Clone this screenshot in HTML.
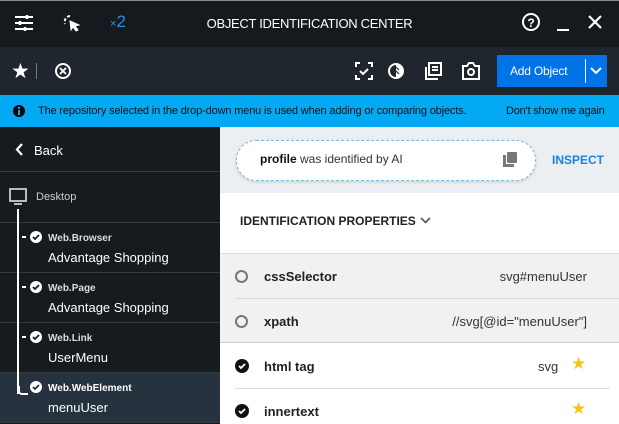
<!DOCTYPE html><html><head><style>
*{margin:0;padding:0;box-sizing:border-box}
body{width:619px;height:424px;overflow:hidden;font-family:"Liberation Sans",sans-serif;background:#fff;position:relative}
.a{position:absolute;white-space:nowrap}
.t{color:#fff}
</style></head><body>
<div class="a" style="left:0;top:0;width:619px;height:47px;background:#151a1e;border-top:1px solid #888"></div>
<svg class="a" style="left:14px;top:14px" width="20" height="18" viewBox="0 0 20 18" stroke="#fff" stroke-width="2" fill="none"><path d="M1 3h18M1 9h18M1 15h18"/><path d="M13 1v4M6 7v4M11 13v4" stroke-width="2.5"/></svg>
<svg class="a" style="left:62px;top:14px" width="20" height="20" viewBox="0 0 20 20" fill="none" stroke="#fff" stroke-width="2"><path d="M8 2a6 6 0 0 0-5 8" stroke-dasharray="3 2"/><path d="M8 7l9 4-4 1 3 4-2 1-3-4-2 3z" fill="#fff" stroke-width="1"/></svg>
<div class="a" style="left:110px;top:12px;color:#2f8fe6;font-size:17px"><span style="font-size:11px">×</span>2</div>
<div class="a t" style="left:0;width:619px;top:16px;text-align:center;font-size:13px;letter-spacing:-0.3px">OBJECT IDENTIFICATION CENTER</div>
<svg class="a" style="left:521px;top:12px" width="20" height="20" viewBox="0 0 20 20"><circle cx="10" cy="10" r="8" stroke="#fff" stroke-width="2" fill="none"/><text x="10" y="15" fill="#fff" font-size="12" font-weight="bold" text-anchor="middle" font-family="Liberation Sans">?</text></svg>
<div class="a" style="left:557px;top:29px;width:12px;height:2px;background:#fff"></div>
<svg class="a" style="left:588px;top:15px" width="14" height="14" stroke="#fff" stroke-width="2.2"><path d="M1 1l12 12M13 1L1 13"/></svg>
<div class="a" style="left:0;top:47px;width:619px;height:48px;background:#1f262d"></div>
<div class="a t" style="left:11px;top:59px;font-size:21px">★</div>
<div class="a" style="left:36px;top:63px;width:1px;height:16px;background:#777"></div>
<svg class="a" style="left:54px;top:62px" width="18" height="18"><circle cx="9" cy="9" r="7" stroke="#fff" stroke-width="2" fill="none"/><path d="M6 6l6 6M12 6l-6 6" stroke="#fff" stroke-width="1.8"/></svg>
<svg class="a" style="left:355px;top:62px" width="18" height="18" stroke="#fff" stroke-width="2" fill="none"><path d="M1 5V1h4M13 1h4v4M17 13v4h-4M5 17H1v-4M5 9l3 3 5-5"/></svg>
<svg class="a" style="left:387px;top:62px" width="18" height="18"><circle cx="9" cy="9" r="7" stroke="#fff" stroke-width="2" fill="none"/><path d="M9 2a7 7 0 0 1 0 14z" fill="#fff"/><path d="M9 5l3 3M9 9l3 3" stroke="#1f262d" stroke-width="1.2"/></svg>
<svg class="a" style="left:424px;top:62px" width="18" height="18" stroke="#fff" stroke-width="2" fill="none"><rect x="5" y="1" width="12" height="12"/><path d="M2 5v12h12M8 5h6M8 8h6"/></svg>
<svg class="a" style="left:461px;top:62px" width="20" height="18" stroke="#fff" stroke-width="2" fill="none"><path d="M2 4h4l2-3h4l2 3h4v13H2z"/><circle cx="10" cy="10" r="3"/></svg>
<div class="a t" style="left:497px;top:55px;width:82px;height:32px;background:#0073e7;font-size:12px;letter-spacing:-0.2px;line-height:32px;padding-left:13px">Add Object</div>
<div class="a" style="left:579px;top:55px;width:28px;height:32px;background:#0073e7"></div>
<div class="a" style="left:585px;top:59px;width:1px;height:24px;background:#fff"></div>
<svg class="a" style="left:590px;top:67px" width="12" height="8" stroke="#fff" stroke-width="2" fill="none"><path d="M1 1l5 5 5-5"/></svg>
<div class="a" style="left:0;top:95px;width:619px;height:32px;background:#03a9f2"></div>
<svg class="a" style="left:13px;top:105px" width="12" height="12"><circle cx="6" cy="6" r="6" fill="#000"/><rect x="5" y="5" width="2" height="5" fill="#03a9f2"/><rect x="5" y="2" width="2" height="2" fill="#03a9f2"/></svg>
<div class="a" style="left:38px;top:105px;font-size:11px;letter-spacing:-0.15px;color:#111">The repository selected in the drop-down menu is used when adding or comparing objects.</div>
<div class="a" style="left:506px;top:105px;font-size:11px;letter-spacing:-0.2px;color:#111">Don't show me again</div>
<!-- left -->
<div class="a" style="left:0;top:127px;width:220px;height:297px;background:#161b1f"></div>
<div class="a" style="left:0;top:372px;width:220px;height:50px;background:#26323e"></div>
<div class="a" style="left:0;top:171px;width:220px;height:1px;background:#333a40"></div>
<div class="a" style="left:0;top:222px;width:220px;height:1px;background:#333a40"></div>
<div class="a" style="left:0;top:272px;width:220px;height:1px;background:#333a40"></div>
<div class="a" style="left:0;top:322px;width:220px;height:1px;background:#333a40"></div>
<div class="a" style="left:0;top:372px;width:220px;height:1px;background:#333a40"></div>
<div class="a" style="left:0;top:422px;width:220px;height:1px;background:#333a40"></div>
<svg class="a" style="left:15px;top:143px" width="8" height="13" stroke="#fff" stroke-width="2.2" fill="none"><path d="M7 1L2 6.5 7 12"/></svg>
<div class="a t" style="left:34px;top:143px;font-size:13px">Back</div>
<svg class="a" style="left:9px;top:188px" width="18" height="18" stroke="#ccc" stroke-width="1.8" fill="none"><rect x="1" y="1" width="16" height="12"/><path d="M5 16h8"/></svg>
<div class="a" style="left:36px;top:191px;font-size:11px;color:#ccc">Desktop</div>
<div class="a" style="left:17px;top:209px;width:2px;height:185px;background:#fff"></div>
<div class="a" style="left:18px;top:386px;width:10px;height:9px;border-left:2px solid #fff;border-bottom:2px solid #fff;border-bottom-left-radius:4px"></div>
<div class="a" style="left:22px;top:236px;width:4px;height:2px;background:#fff"></div>
<div class="a" style="left:22px;top:286px;width:4px;height:2px;background:#fff"></div>
<div class="a" style="left:22px;top:336px;width:4px;height:2px;background:#fff"></div>
<svg class="a" style="left:30px;top:231px" width="12" height="12"><circle cx="6" cy="6" r="6" fill="#fff"/><path d="M3 6l2 2 4-4" stroke="#161b1f" stroke-width="1.8" fill="none"/></svg>
<svg class="a" style="left:30px;top:281px" width="12" height="12"><circle cx="6" cy="6" r="6" fill="#fff"/><path d="M3 6l2 2 4-4" stroke="#161b1f" stroke-width="1.8" fill="none"/></svg>
<svg class="a" style="left:30px;top:331px" width="12" height="12"><circle cx="6" cy="6" r="6" fill="#fff"/><path d="M3 6l2 2 4-4" stroke="#161b1f" stroke-width="1.8" fill="none"/></svg>
<svg class="a" style="left:30px;top:381px" width="12" height="12"><circle cx="6" cy="6" r="6" fill="#fff"/><path d="M3 6l2 2 4-4" stroke="#26323e" stroke-width="1.8" fill="none"/></svg>
<div class="a" style="left:48px;top:233px;font-size:10px;font-weight:bold;color:#ddd">Web.Browser</div>
<div class="a t" style="left:48px;top:250px;font-size:13px">Advantage Shopping</div>
<div class="a" style="left:48px;top:283px;font-size:10px;font-weight:bold;color:#ddd">Web.Page</div>
<div class="a t" style="left:48px;top:300px;font-size:13px">Advantage Shopping</div>
<div class="a" style="left:48px;top:333px;font-size:10px;font-weight:bold;color:#ddd">Web.Link</div>
<div class="a t" style="left:48px;top:350px;font-size:13px">UserMenu</div>
<div class="a" style="left:48px;top:383px;font-size:10px;font-weight:bold;color:#fff">Web.WebElement</div>
<div class="a t" style="left:48px;top:400px;font-size:13px">menuUser</div>
<!-- right -->
<div class="a" style="left:220px;top:127px;width:399px;height:66px;background:#eceff1"></div>
<div class="a" style="left:236px;top:140px;width:300px;height:41px;background:#fff;border:1px dashed #7ab7ef;border-radius:20px;box-shadow:0 1px 3px rgba(0,0,0,.15)"></div>
<div class="a" style="left:260px;top:152px;font-size:12px;color:#333"><b style="color:#111">profile</b> was identified by AI</div>
<svg class="a" style="left:503px;top:152px" width="14" height="15" fill="#777"><rect x="4" y="0" width="10" height="11" rx="1"/><path d="M0 3h3v9h8v3H0z"/></svg>
<div class="a" style="left:552px;top:153px;font-size:12px;font-weight:bold;color:#1a82e2">INSPECT</div>
<div class="a" style="left:240px;top:214px;font-size:12px;font-weight:bold;color:#222">IDENTIFICATION PROPERTIES</div>
<svg class="a" style="left:420px;top:217px" width="11" height="7" stroke="#555" stroke-width="1.6" fill="none"><path d="M1 1l4.5 4.5L10 1"/></svg>
<div class="a" style="left:220px;top:253px;width:399px;height:90px;background:#f1f1f1;border-top:1px solid #ddd;border-bottom:1px solid #ccc"></div>
<div class="a" style="left:235px;top:298px;width:384px;height:1px;background:#d8d8d8"></div>
<div class="a" style="left:235px;top:388px;width:375px;height:1px;background:#ddd"></div>
<div class="a" style="left:235px;top:270px;width:13px;height:13px;border:2px solid #777;border-radius:50%"></div>
<div class="a" style="left:235px;top:315px;width:13px;height:13px;border:2px solid #777;border-radius:50%"></div>
<svg class="a" style="left:235px;top:359px" width="14" height="14"><circle cx="7" cy="7" r="7" fill="#111"/><path d="M4 7l2 2 4-4" stroke="#fff" stroke-width="1.8" fill="none"/></svg>
<svg class="a" style="left:235px;top:404px" width="14" height="14"><circle cx="7" cy="7" r="7" fill="#111"/><path d="M4 7l2 2 4-4" stroke="#fff" stroke-width="1.8" fill="none"/></svg>
<div class="a" style="left:264px;top:269px;font-size:13px;font-weight:bold;color:#222">cssSelector</div>
<div class="a" style="left:264px;top:314px;font-size:13px;font-weight:bold;color:#222">xpath</div>
<div class="a" style="left:264px;top:359px;font-size:13px;font-weight:bold;color:#222">html tag</div>
<div class="a" style="left:264px;top:404px;font-size:13px;font-weight:bold;color:#222">innertext</div>
<div class="a" style="right:32px;top:269px;font-size:13px;color:#333">svg#menuUser</div>
<div class="a" style="right:32px;top:314px;font-size:13px;color:#333">//svg[@id="menuUser"]</div>
<div class="a" style="left:538px;top:359px;font-size:13px;color:#333">svg</div>
<div class="a" style="left:571px;top:354px;font-size:17px;color:#f5c518">★</div>
<div class="a" style="left:571px;top:399px;font-size:17px;color:#f5c518">★</div>
</body></html>
